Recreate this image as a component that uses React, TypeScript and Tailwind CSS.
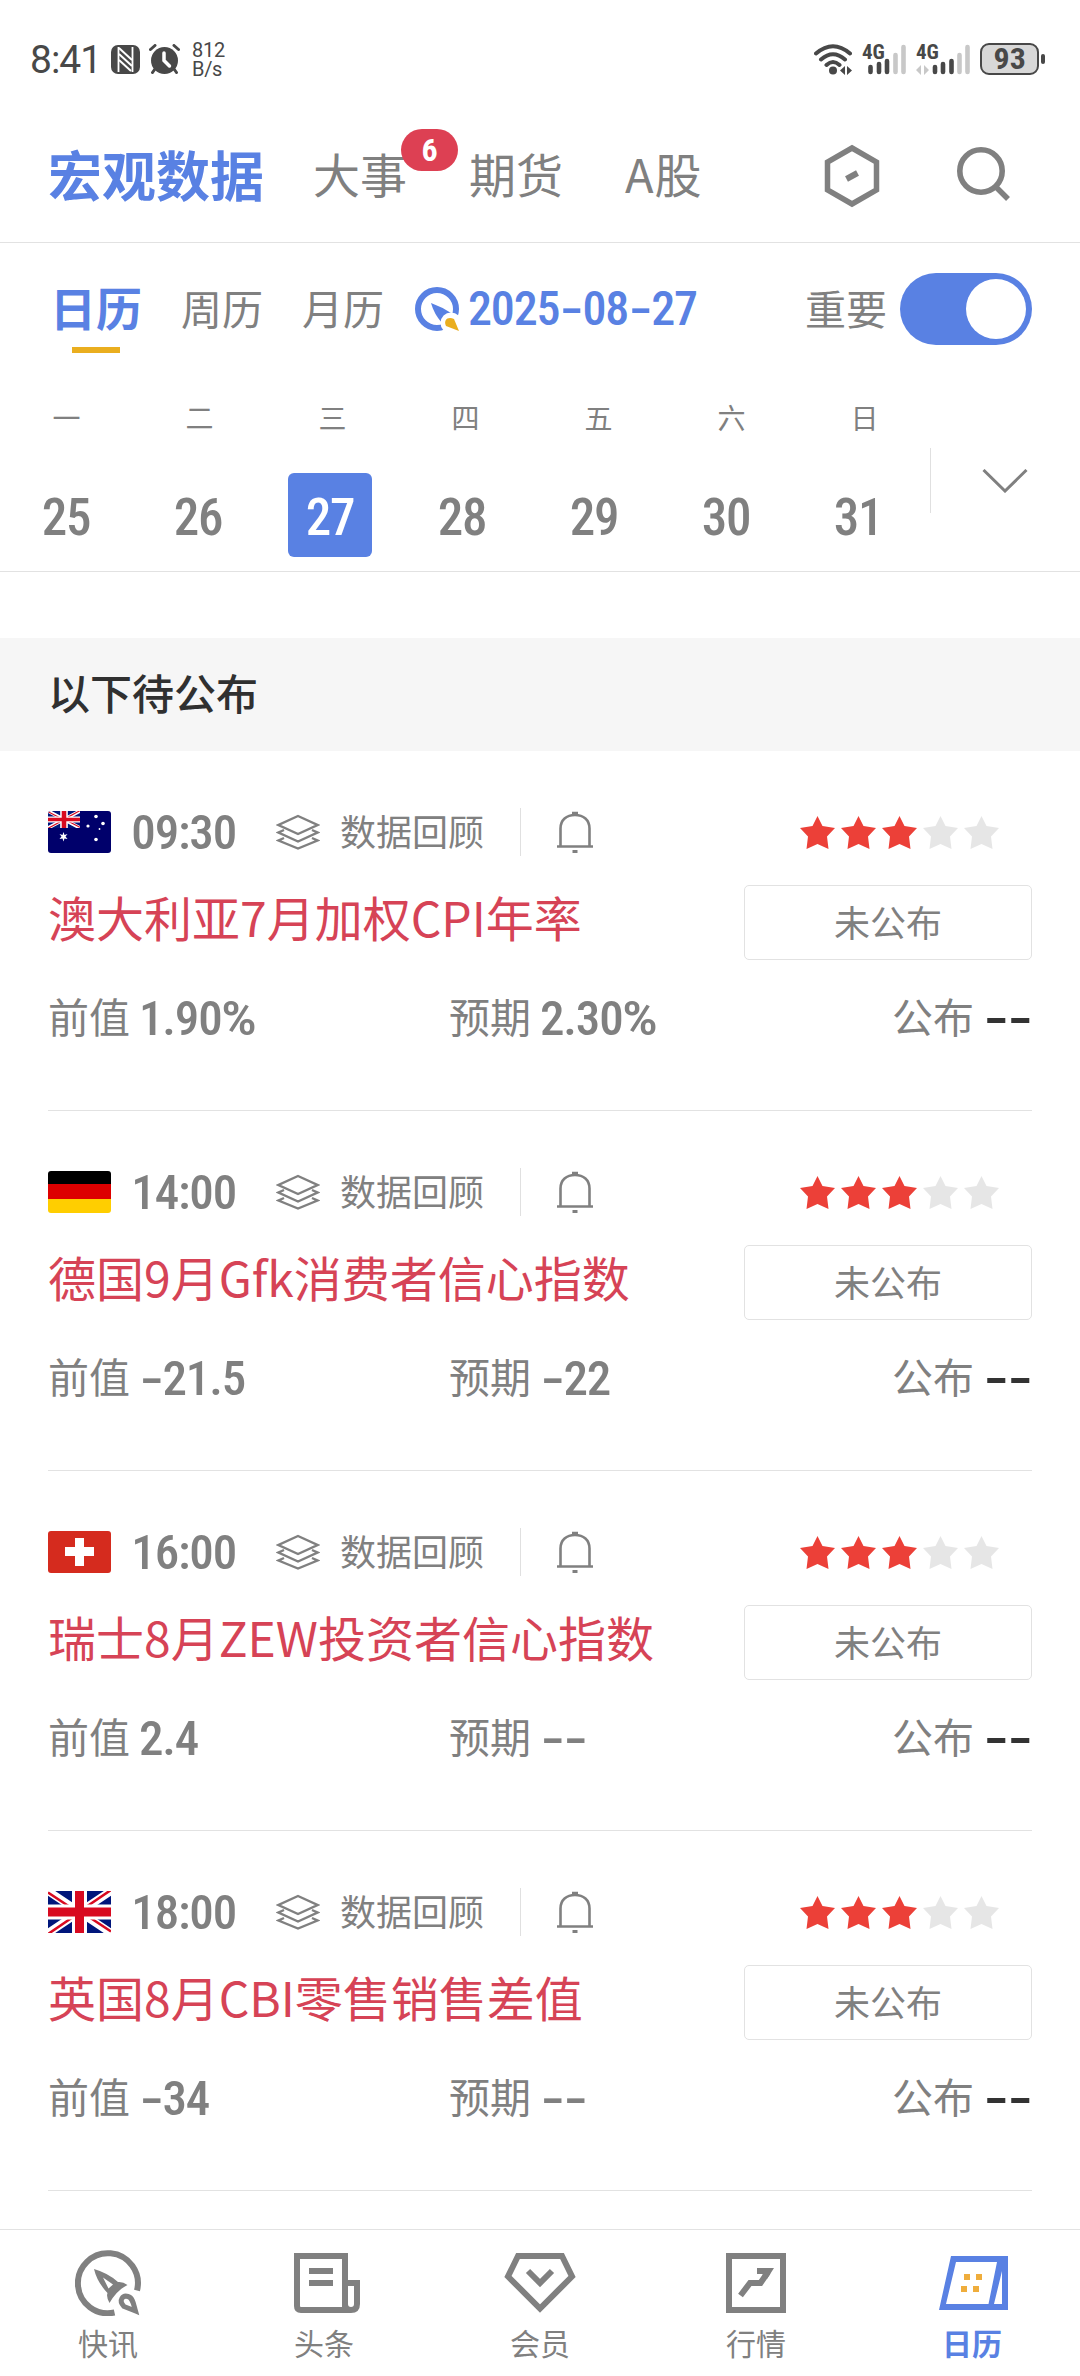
import React, { useState } from "react";

const events = [
  { flag: "au", time: "09:30", title: "澳大利亚7月加权CPI年率", prev: "1.90%", expect: "2.30%" },
  { flag: "de", time: "14:00", title: "德国9月Gfk消费者信心指数", prev: "-21.5", expect: "-22" },
  { flag: "ch", time: "16:00", title: "瑞士8月ZEW投资者信心指数", prev: "2.4", expect: "--" },
  { flag: "gb", time: "18:00", title: "英国8月CBI零售销售差值", prev: "-34", expect: "--" },
];

const days = [
  { week: "一", date: 25 },
  { week: "二", date: 26 },
  { week: "三", date: 27 },
  { week: "四", date: 28 },
  { week: "五", date: 29 },
  { week: "六", date: 30 },
  { week: "日", date: 31 },
];

// condensed digits, hyphens are as wide as a digit
const Num = ({ value, className = "" }) => (
  <span
    className={`font-[Roboto,sans-serif] font-medium font-stretch-75% tracking-[-0.024em] whitespace-nowrap leading-none ${className}`}
  >
    {value.split("").map((c, i) => {
      if (c === "-") {
        return (
          <span key={i} className="inline-block w-[0.48em] text-center">
            <span className="inline-block scale-x-160">-</span>
          </span>
        );
      }
      if (c === "%") {
        return (
          <span key={i} className="inline-block origin-left scale-x-115">
            %
          </span>
        );
      }
      return c;
    })}
  </span>
);

const UnionJack = () => (
  <>
    <rect width="63" height="42" fill="#00167b" />
    <path d="M0 0L63 42M63 0L0 42" stroke="#fff" strokeWidth="8" />
    <path d="M0 1.5L25 18M63 -1L38 16M0 43L25 26M63 40.5L38 24" stroke="#d80a20" strokeWidth="2.6" />
    <path d="M31.500 0V42M0 21H63" stroke="#fff" strokeWidth="15" />
    <path d="M31.500 0V42M0 21H63" stroke="#d80a20" strokeWidth="9" />
  </>
);

const Flag = ({ code }) => (
  <svg viewBox="0 0 63 42" className={`w-[63px] h-[42px] ${code === "gb" ? "" : "rounded-[3px]"}`}>
    {code === "au" && (
      <>
        <rect width="63" height="42" fill="#00006b" />
        <svg width="32" height="17" viewBox="0 0 63 42" preserveAspectRatio="none">
          <UnionJack />
        </svg>
        <g fill="#fff">
          <path d="M15.500 21l1 3 3-1-2 2.500 2 2.500-3-.5-1 3-1-3-3 .5 2-2.500-2-2.500 3 1z" />
          <circle cx="48" cy="5.500" r="1.800" />
          <circle cx="55" cy="12.500" r="1.800" />
          <circle cx="40" cy="15" r="1.600" />
          <circle cx="48" cy="28.500" r="1.800" />
          <circle cx="51.500" cy="18" r="0.900" />
        </g>
      </>
    )}
    {code === "de" && (
      <>
        <rect width="63" height="13" fill="#000" />
        <rect y="13" width="63" height="15" fill="#d00" />
        <rect y="28" width="63" height="14" fill="#ffce00" />
      </>
    )}
    {code === "ch" && (
      <>
        <rect width="63" height="42" fill="#d52b1e" />
        <path d="M31.500 7V35M17 20.500H46" stroke="#fff" strokeWidth="9" />
      </>
    )}
    {code === "gb" && <UnionJack />}
  </svg>
);

const LayersIcon = () => (
  <svg viewBox="0 0 44 36" className="w-11 h-9" fill="none" stroke="#808080" strokeWidth="2.400">
    <path d="M22 2L41.500 11L22 20L2.500 11Z" />
    <path d="M8 16L2.500 18.500L22 27.500L41.500 18.500L36 16" />
    <path d="M8 24L2.500 26.500L22 34.500L41.500 26.500L36 24" />
  </svg>
);

const BellIcon = () => (
  <svg viewBox="0 0 36 42" className="w-9 h-[42px]" fill="none" stroke="#808080" strokeWidth="2.600">
    <path d="M3.500 35V17.500C3.500 9 9.500 4 18 4S32.500 9 32.500 17.500V35" />
    <path d="M0 35.500H36" />
    <path d="M15 2.200H21M15.500 40.500H20.500" strokeWidth="3" />
  </svg>
);

const Stars = ({ count }) => (
  <div className="flex gap-[6px]">
    {[0, 1, 2, 3, 4].map((i) => (
      <svg key={i} viewBox="0 0 35 33" className="w-[35px] h-[33px]">
        <path
          d="M17.500 0L22.500 10L35 12L27 20.500L28.500 33L17.500 28L6.500 33L8 20.500L0 12L12.500 10Z"
          fill={i < count ? "#ec4038" : "#e6e6e6"}
        />
      </svg>
    ))}
  </div>
);

const StatusBar = () => (
  <div className="h-[110px] shrink-0 flex items-start text-[#484848] font-[Roboto,sans-serif]">
    <div className="w-[80px] ml-[30px] mt-[40px] text-[39px] leading-[40px] tracking-[-1px] whitespace-nowrap">8:41</div>
    <svg viewBox="0 0 29 29" className="w-[29px] h-[29px] mt-[45px] ml-px">
      <rect width="29" height="29" rx="7" fill="#484848" />
      <path d="M7.500 2V27M21.500 2V27" stroke="#fff" strokeWidth="1.800" />
      <path d="M8 3L21 15M8 9L21 21M8 15L20 26" stroke="#fff" strokeWidth="2" />
    </svg>
    <svg viewBox="0 0 31 30" className="w-[31px] h-[30px] mt-[44px] ml-[9px]" fill="none" stroke="#484848" strokeLinecap="round">
      <circle cx="15.500" cy="16.500" r="13.500" fill="#484848" stroke="none" />
      <path d="M1.500 5.500L6 1.500M29.500 5.500L25 1.500M6 25L3.500 28.500M25 25L27.500 28.500" strokeWidth="3" />
      <path d="M15 9V16.500L20.500 22" stroke="#fff" strokeWidth="3.500" />
    </svg>
    <div className="ml-[12px] mt-[41px] text-[20px] leading-[19px] tracking-[-0.300px]">
      <div>812</div>
      <div>B/s</div>
    </div>
    <div className="ml-auto flex items-start">
      <svg viewBox="0 0 38 31" className="w-[38px] h-[31px] mt-[44px]" fill="none" stroke="#484848" strokeWidth="4" strokeLinecap="round">
        <path d="M2 9.500Q19-5 36 9.500M7 15.500Q19 5 31 15.500M12.500 21Q19 15 25.500 21" />
        <circle cx="19" cy="26.500" r="4" fill="#484848" stroke="none" />
        <path d="M31 22V31L26 26.500ZM33 22V31L38 26.500Z" fill="#484848" stroke="none" />
      </svg>
      <div className="relative w-[44px] h-[31px] mt-[44px] ml-[10px]">
        <span className="absolute left-0 -top-px text-[21px] leading-[18px] font-bold font-stretch-75%">4G</span>
        <svg viewBox="0 0 44 31" className="w-[44px] h-[31px]" strokeWidth="4.600" strokeLinecap="round">
          <path d="M8.500 23V28M17 20V28M25 17V28" stroke="#484848" />
          <path d="M33.500 11V28M41.500 3V28" stroke="#c8c8c8" />
        </svg>
      </div>
      <div className="relative w-[54px] h-[31px] mt-[44px] ml-[10px]">
        <span className="absolute left-0 -top-px text-[21px] leading-[18px] font-bold font-stretch-75%">4G</span>
        <svg viewBox="0 0 54 31" className="w-[54px] h-[31px]" strokeWidth="4.600" strokeLinecap="round">
          <path d="M5 21V31L0 26ZM8 21V31L13 26Z" fill="#c8c8c8" />
          <path d="M19 23V28M27 20V28M35.500 17V28" stroke="#484848" />
          <path d="M43.500 11V28M51.500 3V28" stroke="#c8c8c8" />
        </svg>
      </div>
      <div className="ml-[10px] mt-[43px] w-[59px] h-[32px] rounded-[9px] border-2 border-[#484848] bg-[#d8d8d8] flex items-center justify-center text-[29px] leading-none font-bold font-stretch-semi-condensed">
        <span className="inline-block scale-x-110">93</span>
      </div>
      <div className="mt-[54px] ml-[2px] mr-[35px] w-[4px] h-[10px] rounded-full bg-[#484848]" />
    </div>
  </div>
);

const Header = () => (
  <div className="h-[133px] shrink-0 border-b border-[#e2e2e2] flex items-center pl-12 text-[47px] leading-none text-[#808080]">
    <div className="text-[54px] font-bold text-[#5981e3] pb-1">宏观数据</div>
    <div className="relative ml-[49px] pb-[7px] whitespace-nowrap">
      大事
      <span className="absolute left-[88px] -top-[20px] w-[57px] h-[42px] rounded-full bg-[#dd4053] text-white font-[Roboto,sans-serif] font-bold font-stretch-semi-condensed text-[32px] leading-[42px] text-center">
        6
      </span>
    </div>
    <div className="ml-[62px] pb-[7px]">期货</div>
    <div className="ml-[62px] pb-[7px] tracking-[1px]">A股</div>
    <svg viewBox="0 0 56 64" className="ml-auto w-14 h-16" fill="none" stroke="#808080">
      <path d="M28 4L52.500 18V46L28 60L3.500 46V18Z" strokeWidth="5.500" />
      <path d="M22.500 35L33.500 29" strokeWidth="6" />
    </svg>
    <svg viewBox="0 0 54 54" className="ml-[76px] mr-[70px] w-[54px] h-[54px] mb-1" fill="none" stroke="#808080">
      <circle cx="25" cy="24" r="21.200" strokeWidth="5.600" />
      <path d="M40 40L52 52" strokeWidth="5.500" />
    </svg>
  </div>
);

const Calendar = () => {
  const [selected, setSelected] = useState(27);
  const [important, setImportant] = useState(true);

  return (
    <div className="h-[329px] shrink-0 border-b border-[#e2e2e2] text-[#808080]">
      <div className="h-[131px] flex items-center text-[41px] leading-none">
        <div className="relative ml-[50px] w-[93px] pb-[5px] text-[46px] font-bold text-[#5981e3] whitespace-nowrap">
          日历
          <div className="absolute left-[22px] top-[64px] w-12 h-1.5 bg-[#eaae1f]" />
        </div>
        <div className="ml-[38px] pb-[3px]">周历</div>
        <div className="ml-[39px] pb-[3px]">月历</div>
        <svg viewBox="0 0 44 44" className="ml-[31px] w-11 h-11">
          <circle cx="22" cy="22" r="19" fill="none" stroke="#5981e3" strokeWidth="6" />
          <path d="M16 16Q27 20 36 26L27 36Q19 27 16 16Z" fill="#5981e3" />
          <circle cx="36" cy="36" r="10.500" fill="#fff" />
          <path d="M44 44L31 39C28 33 33 29 39 32Z" fill="#eaae1f" />
        </svg>
        <Num value="2025-08-27" className="ml-[9px] text-[48px] text-[#5981e3]" />
        <div className="ml-auto pb-[3px]">重要</div>
        <button
          onClick={() => setImportant(!important)}
          className={`ml-[13px] mr-12 w-[132px] h-[72px] rounded-full p-[6px] flex items-center ${
            important ? "bg-[#5981e3] justify-end" : "bg-[#cccccc] justify-start"
          }`}
        >
          <span className="w-[60px] h-[60px] rounded-full bg-white" />
        </button>
      </div>
      <div className="flex">
        <div className="w-[930px]">
          <div className="flex pt-[29px] text-[28px] leading-[28px] text-center">
            {days.map((d) => (
              <div key={d.week} className="w-[133px] shrink-0">
                {d.week}
              </div>
            ))}
          </div>
          <div className="flex mt-[42px]">
            {days.map((d) => (
              <div key={d.date} className="w-[132px] shrink-0 flex justify-center">
                <button
                  onClick={() => setSelected(d.date)}
                  className={`w-[84px] h-[84px] pt-[5px] rounded-[6px] flex items-center justify-center ${
                    d.date === selected ? "bg-[#5981e3] text-white" : ""
                  }`}
                >
                  <Num value={String(d.date)} className="text-[51px]" />
                </button>
              </div>
            ))}
          </div>
        </div>
        <div className="mt-[74px] h-[65px] flex-1 border-l border-[#e0e0e0] flex items-center">
          <svg viewBox="0 0 46 24" className="ml-[51px] w-[46px] h-6" fill="none" stroke="#808080" strokeWidth="3">
            <path d="M1.500 1L23 22L44.500 1" />
          </svg>
        </div>
      </div>
    </div>
  );
};

const EventCard = ({ event }) => (
  <div className="h-[360px] shrink-0 mx-12 border-b border-[#e2e2e2] pt-[57px] text-[#808080] leading-none">
    <div className="flex items-center h-12">
      <Flag code={event.flag} />
      <div className="w-[125px] flex justify-end">
        <Num value={event.time} className="text-[49px]" />
      </div>
      <div className="ml-[40px]">
        <LayersIcon />
      </div>
      <div className="ml-[20px] pb-1 text-[36px]">数据回顾</div>
      <div className="ml-[36px] w-px h-12 bg-[#e0e0e0]" />
      <div className="ml-[36px]">
        <BellIcon />
      </div>
      <div className="ml-auto mr-[33px]">
        <Stars count={3} />
      </div>
    </div>
    <div className="flex items-center justify-between mt-[29px] h-[75px]">
      <div className="text-[48px] text-[#d64356] pb-[13px] whitespace-nowrap">{event.title}</div>
      <div className="w-[288px] h-[75px] pb-[3px] rounded-[5px] border border-[#e2e2e2] flex items-center justify-center text-[36px]">
        未公布
      </div>
    </div>
    <div className="flex items-center mt-[34px] h-12 text-[41px]">
      <div className="w-[401px] flex items-center gap-[9px]">
        <span className="pb-[5px]">前值</span>
        <Num value={event.prev} className="text-[49px]" />
      </div>
      <div className="flex items-center gap-[9px]">
        <span className="pb-[5px]">预期</span>
        <Num value={event.expect} className="text-[49px]" />
      </div>
      <div className="ml-auto flex items-center gap-[9px]">
        <span className="pb-[5px]">公布</span>
        <Num value="--" className="text-[51px] text-[#333333]" />
      </div>
    </div>
  </div>
);

const tabs = [
  {
    name: "快讯",
    icon: (
      <svg viewBox="0 0 66 66" className="w-[66px] h-[66px]" fill="none" stroke="#808080" strokeWidth="6">
        <path d="M62 40.500A30 30 0 1 0 39.500 62.500" />
        <path fillRule="evenodd" fill="#808080" stroke="none" d="M19 19Q33 23 43 32Q48 31.500 52.500 35Q42 40 34.500 53Q31 47 32.500 43Q22 32 19 19ZM28 27.500L33.500 38.500L38 34.500Z" />
        <path d="M60.500 61L49 56.500C43 50 48 45 53 46.500C58 48 58.500 54 60.500 61Z" strokeWidth="5" />
      </svg>
    ),
  },
  {
    name: "头条",
    icon: (
      <svg viewBox="0 0 66 66" className="ml-[6px] w-[66px] h-[66px]" fill="none" stroke="#808080" strokeWidth="6">
        <path d="M51 57V6H3V56Q3 60 7 60H57Q63 60 63 54V33H51M51 54Q51 60 57 60" />
        <path d="M15 21H39M15 33H39" />
      </svg>
    ),
  },
  {
    name: "会员",
    icon: (
      <svg viewBox="0 0 72 66" className="w-[72px] h-[66px]" fill="none" stroke="#808080" strokeWidth="6">
        <path d="M14 6H58L68 26.500L36 58.500L4 26.500Z" />
        <path d="M24 21L36 33L48 21" />
      </svg>
    ),
  },
  {
    name: "行情",
    icon: (
      <svg viewBox="0 0 60 66" className="w-[60px] h-[66px]" fill="none" stroke="#808080" strokeWidth="6">
        <path d="M3 6H57V60H3Z" />
        <path d="M14.500 45.500L24 33H34.500L42 22" />
        <path d="M31 18H48L41 29L36 25L38 24H31Z" fill="#808080" stroke="none" />
      </svg>
    ),
  },
  {
    name: "日历",
    active: true,
    icon: (
      <svg viewBox="0 0 69 66" className="ml-[3px] w-[69px] h-[66px]">
        <path fillRule="evenodd" fill="#5981e3" d="M12 6H69V60H0ZM17 12L7 54H49.500L58 12ZM63 21L55 54H63Z" />
        <path fill="#efad3c" d="M25 24h6v6h-6zM37 24h6v6h-6zM22 36h6v6h-6zM34 36h6v6h-6z" />
      </svg>
    ),
  },
];

const TabBar = () => (
  <div className="h-[147px] shrink-0 border-t border-[#e2e2e2] flex pt-[20px]">
    {tabs.map((t) => (
      <div key={t.name} className="flex-1 flex flex-col items-center">
        {t.icon}
        <div className={`mt-[11px] text-[30px] leading-[30px] ${t.active ? "text-[#5981e3] font-bold" : "text-[#808080]"}`}>
          {t.name}
        </div>
      </div>
    ))}
  </div>
);

const App = () => {
  return (
    <div className="w-[1080px] h-[2376px] overflow-hidden flex flex-col bg-white font-['Noto_Sans_CJK_SC',sans-serif]">
      <StatusBar />
      <Header />
      <Calendar />
      <div className="h-[113px] shrink-0 mt-[66px] bg-[#f6f6f6] flex items-center pl-12 pb-[6px] text-[42px] leading-none font-medium text-[#303030]">
        以下待公布
      </div>
      <div className="flex-1 overflow-hidden flex flex-col">
        {events.map((e) => (
          <EventCard key={e.flag} event={e} />
        ))}
      </div>
      <TabBar />
    </div>
  );
};

export default App;
